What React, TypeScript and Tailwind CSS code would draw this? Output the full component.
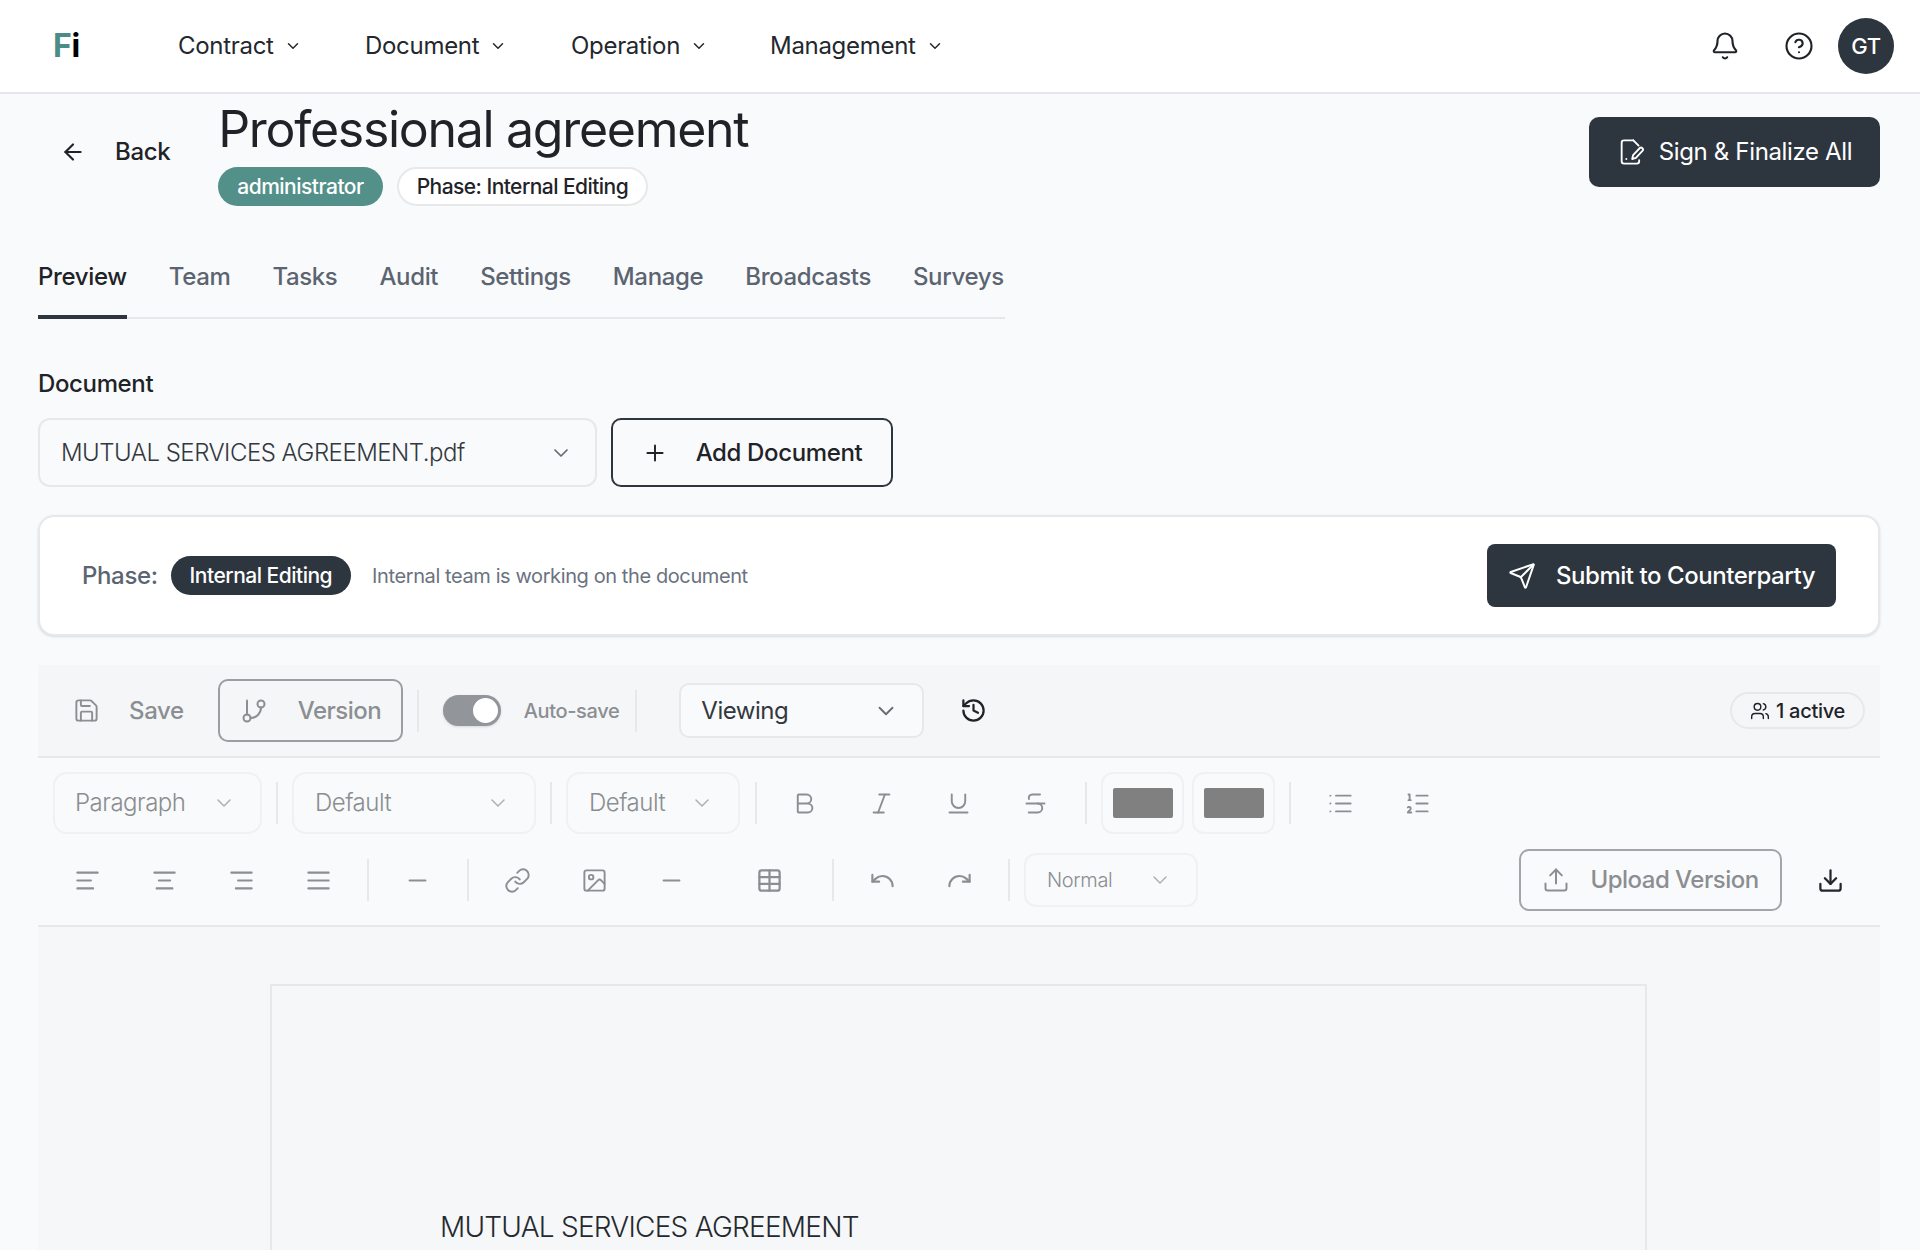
import {
  AlignCenter,
  AlignJustify,
  AlignLeft,
  AlignRight,
  ArrowLeft,
  Bell,
  Bold,
  ChevronDown,
  CircleHelp,
  Download,
  GitBranch,
  History,
  Image as ImageIcon,
  Italic,
  Link,
  List,
  ListOrdered,
  Minus,
  Plus,
  Redo,
  Save,
  Send,
  Strikethrough,
  Table,
  Underline,
  Undo,
  Upload,
  Users,
} from 'lucide-react'

const navItems = [
  { label: 'Contract', width: 'w-[187px]' },
  { label: 'Document', width: 'w-[206px]' },
  { label: 'Operation', width: 'w-[199px]' },
  { label: 'Management', width: 'w-auto' },
]

const tabs = ['Preview', 'Team', 'Tasks', 'Audit', 'Settings', 'Manage', 'Broadcasts', 'Surveys']

function SignIcon() {
  return (
    <svg width="28" height="28" viewBox="0 0 24 24" fill="none" stroke="currentColor" strokeWidth="1.6" strokeLinecap="round" strokeLinejoin="round">
      <path d="M14 2H6a2 2 0 0 0-2 2v16a2 2 0 0 0 2 2h11a2 2 0 0 0 2-2v-1" />
      <path d="M14 2l4.5 4.5" />
      <path d="M8 18h.01" />
      <path d="M13 18l.8-3.4 5.6-5.8a1.6 1.6 0 0 1 2.4 2.3l-5.6 5.9z" />
    </svg>
  )
}

function Divider({ className }: { className: string }) {
  return <div className={`w-0.5 h-[42px] bg-[#e7e8ea] shrink-0 ${className}`} />
}

function ToolButton({ children }: { children: React.ReactNode }) {
  return <button className="w-[77px] h-[42px] flex items-center justify-center text-[#8b8e92] shrink-0">{children}</button>
}

function Dropdown({ label, className }: { label: string; className: string }) {
  return (
    <div className={`h-[62px] rounded-[14px] border-2 border-[#f0f1f2] flex items-center justify-between text-[24px] font-light tracking-[-0.5px] text-[#8a8d91] shrink-0 ${className}`}>
      {label}
      <ChevronDown size={24} strokeWidth={1.5} className="text-[#aeb0b3]" />
    </div>
  )
}

export default function App() {
  return (
    <div className="w-[1920px] h-[1250px] overflow-hidden bg-[#f9fafb] text-[#1f2328] tracking-[-0.36px] font-['Inter',sans-serif]">
      <header className="h-[94px] bg-white border-b-2 border-[#e5e7eb] flex items-center pl-[53px] pr-[26px]">
        <div className="w-[125px] text-[32px] leading-none font-bold text-black">
          <span className="text-[#4c8c88]">F</span>i
        </div>
        {navItems.map(({ label, width }) => (
          <div key={label} className={`flex items-center gap-[10px] text-[24px] text-[#23282e] tracking-[-0.3px] ${width}`}>
            {label}
            <ChevronDown size={18} strokeWidth={2} />
          </div>
        ))}
        <div className="ml-auto flex items-center">
          <Bell size={30} strokeWidth={1.7} className="mr-[44px]" />
          <CircleHelp size={30} strokeWidth={1.7} className="mr-[24px]" />
          <div className="w-[56px] h-[56px] rounded-full bg-[#2d353e] text-white text-[22px] font-medium flex items-center justify-center">GT</div>
        </div>
      </header>

      <main className="pl-[38px] pr-[40px]">
        <div className="flex items-center pt-[2px]">
          <button className="flex items-center gap-[29px] ml-[22px] mr-[48px] mt-[2px] text-[24px] font-medium">
            <ArrowLeft size={26} strokeWidth={2} />
            Back
          </button>
          <div className="-mt-[2px]">
            <h1 className="text-[50px] leading-[70px] font-normal tracking-[-1.3px]">Professional agreement</h1>
            <div className="flex items-center gap-[14px] mt-[3px]">
              <span className="h-[39px] px-[19px] rounded-full bg-[#54908a] text-white text-[21px] font-medium flex items-center tracking-[-0.5px]">administrator</span>
              <span className="h-[39px] px-[18px] rounded-full bg-white border-2 border-[#e7e8ea] text-[21px] font-medium flex items-center tracking-[-0.55px]">Phase: Internal Editing</span>
            </div>
          </div>
          <button className="ml-auto mt-[2px] w-[291px] h-[70px] rounded-[10px] bg-[#2d353e] text-white text-[24px] font-normal tracking-[-0.35px] flex items-center justify-center gap-[14px]">
            <SignIcon />
            Sign &amp; Finalize All
          </button>
        </div>

        <div className="flex gap-[42px] w-[967px] mt-[53px] border-b-2 border-[#e5e7eb]">
          {tabs.map((tab, i) => (
            <div
              key={tab}
              className={`h-[60px] -mb-0.5 text-[24px] leading-[36px] font-medium border-b-4 ${i === 0 ? 'border-[#2d353e] text-[#1f2328]' : 'border-transparent text-[#5b6470]'}`}
            >
              {tab}
            </div>
          ))}
        </div>

        <div className="mt-[49px] text-[24px] leading-[32px] font-medium">Document</div>
        <div className="flex gap-[14px] mt-[18px]">
          <div className="w-[559px] h-[69px] rounded-[12px] border-2 border-[#e7e8ea] flex items-center justify-between pl-[21px] pr-[22px] text-[24px] font-light tracking-[-0.5px] text-[#33383e]">
            MUTUAL SERVICES AGREEMENT.pdf
            <ChevronDown size={24} strokeWidth={1.7} className="text-[#666c73]" />
          </div>
          <button className="w-[282px] h-[69px] rounded-[10px] border-2 border-[#2d353e] flex items-center justify-center gap-[28px] text-[24px] font-medium">
            <Plus size={26} strokeWidth={1.8} />
            Add Document
          </button>
        </div>

        <div className="mt-[28px] h-[121px] rounded-[16px] bg-white border-2 border-[#e7e8ea] shadow-sm flex items-center pl-[42px] pr-[42px]">
          <span className="text-[24px] font-medium text-[#5b6470]">Phase:</span>
          <span className="ml-[13px] h-[39px] px-[19px] rounded-full bg-[#2d353e] text-white text-[21px] font-medium flex items-center tracking-[-0.5px]">Internal Editing</span>
          <span className="ml-[21px] text-[20px] tracking-[-0.4px] text-[#6b7280]">Internal team is working on the document</span>
          <button className="ml-auto w-[349px] h-[63px] rounded-[8px] bg-[#2d353e] text-white text-[24px] font-medium tracking-[-0.45px] flex items-center justify-center gap-[20px]">
            <Send size={28} strokeWidth={1.7} />
            Submit to Counterparty
          </button>
        </div>

        <section className="mt-[29px]">
          <div className="h-[93px] bg-[#f5f6f8] border-b-2 border-[#e7e8ea] flex items-center pl-[35px] pr-[15px]">
            <Save size={27} strokeWidth={1.7} className="text-[#8b8e92]" />
            <span className="ml-[29px] text-[24px] font-medium text-[#8b8e92]">Save</span>
            <button className="ml-[34px] w-[185px] h-[63px] rounded-[10px] border-2 border-[#9a9da1] flex items-center pl-[20px] gap-[30px] text-[24px] font-medium tracking-[-0.5px] text-[#8b8e92]">
              <GitBranch size={28} strokeWidth={1.7} />
              Version
            </button>
            <Divider className="ml-[14px]" />
            <div className="ml-[24px] w-[58px] h-[31px] rounded-full bg-[#92959a] p-[3px] flex justify-end shadow-sm">
              <div className="w-[25px] h-[25px] rounded-full bg-white" />
            </div>
            <span className="ml-[23px] text-[20px] font-medium text-[#8b8e92]">Auto-save</span>
            <Divider className="ml-[16px]" />
            <div className="ml-[42px] w-[245px] h-[55px] rounded-[10px] bg-[#f9fafb] border-2 border-[#e7e8ea] flex items-center justify-between pl-[20px] pr-[23px] text-[24px] tracking-[-0.5px] text-[#33383e]">
              Viewing
              <ChevronDown size={26} strokeWidth={1.7} className="text-[#666c73]" />
            </div>
            <History size={27} strokeWidth={2} className="ml-[36px]" />
            <div className="ml-auto h-[37px] w-[135px] rounded-full border-2 border-[#e7e8ea] flex items-center justify-center gap-[6px] text-[20px] font-medium tracking-[-0.3px]">
              <Users size={20} strokeWidth={1.7} />
              1 active
            </div>
          </div>

          <div className="h-[169px] border-b-2 border-[#e7e8ea] px-[15px] pt-[14px]">
            <div className="flex items-center">
              <Dropdown label="Paragraph" className="w-[209px] pl-[20px] pr-[24px]" />
              <Divider className="mx-[14px]" />
              <Dropdown label="Default" className="w-[244px] pl-[21px] pr-[24px]" />
              <Divider className="mx-[14px]" />
              <Dropdown label="Default" className="w-[174px] pl-[21px] pr-[24px]" />
              <Divider className="ml-[15px] mr-[9px]" />
              <ToolButton><Bold size={27} strokeWidth={1.7} /></ToolButton>
              <ToolButton><Italic size={27} strokeWidth={1.7} /></ToolButton>
              <ToolButton><Underline size={27} strokeWidth={1.7} /></ToolButton>
              <ToolButton><Strikethrough size={27} strokeWidth={1.7} /></ToolButton>
              <Divider className="ml-[11px] mr-[14px]" />
              <div className="w-[83px] h-[62px] rounded-[12px] border-2 border-[#f0f1f2] flex items-center justify-center">
                <div className="w-[60px] h-[30px] rounded-[2px] bg-[#808080]" />
              </div>
              <div className="ml-[8px] w-[83px] h-[62px] rounded-[12px] border-2 border-[#f0f1f2] flex items-center justify-center">
                <div className="w-[60px] h-[30px] rounded-[2px] bg-[#808080]" />
              </div>
              <Divider className="ml-[14px] mr-[11px]" />
              <ToolButton><List size={27} strokeWidth={1.7} /></ToolButton>
              <ToolButton><ListOrdered size={27} strokeWidth={1.7} /></ToolButton>
            </div>

            <div className="flex items-center mt-[15px] h-[62px] -ml-[4px]">
              <ToolButton><AlignLeft size={27} strokeWidth={1.9} /></ToolButton>
              <ToolButton><AlignCenter size={27} strokeWidth={1.9} /></ToolButton>
              <ToolButton><AlignRight size={27} strokeWidth={1.9} /></ToolButton>
              <ToolButton><AlignJustify size={27} strokeWidth={1.9} /></ToolButton>
              <Divider className="ml-[10px] mr-[10px]" />
              <ToolButton><Minus size={27} strokeWidth={1.9} /></ToolButton>
              <Divider className="ml-[11px] mr-[10px]" />
              <ToolButton><Link size={27} strokeWidth={1.7} /></ToolButton>
              <ToolButton><ImageIcon size={27} strokeWidth={1.7} /></ToolButton>
              <ToolButton><Minus size={27} strokeWidth={1.9} /></ToolButton>
              <div className="w-[21px]" />
              <ToolButton><Table size={27} strokeWidth={2} /></ToolButton>
              <Divider className="ml-[24px] mr-[10px]" />
              <ToolButton><Undo size={27} strokeWidth={1.9} /></ToolButton>
              <ToolButton><Redo size={27} strokeWidth={1.9} /></ToolButton>
              <Divider className="ml-[10px] mr-[14px]" />
              <div className="w-[174px] h-[54px] rounded-[12px] border-2 border-[#f0f1f2] flex items-center justify-between pl-[21px] pr-[24px] text-[20px] font-light text-[#8a8d91]">
                Normal
                <ChevronDown size={24} strokeWidth={1.5} className="text-[#aeb0b3]" />
              </div>
              <button className="ml-auto w-[263px] h-[62px] rounded-[10px] border-2 border-[#a2a5a9] flex items-center justify-center gap-[20px] text-[24px] font-medium tracking-[-0.5px] text-[#8b8e92]">
                <Upload size={28} strokeWidth={1.7} />
                Upload Version
              </button>
              <Download size={27} strokeWidth={2} className="ml-[35px] mr-[21px] text-[#22272c]" />
            </div>
          </div>

          <div className="h-[400px] bg-[#f6f7f9] pl-[232px] pr-[233px] pt-[57px]">
            <div className="h-[400px] border-2 border-[#e7e8ea] pl-[168px] pt-[221px] text-[28px] leading-[40px] font-light tracking-[-0.75px] text-[#25292e]">
              MUTUAL SERVICES AGREEMENT
            </div>
          </div>
        </section>
      </main>
    </div>
  )
}
